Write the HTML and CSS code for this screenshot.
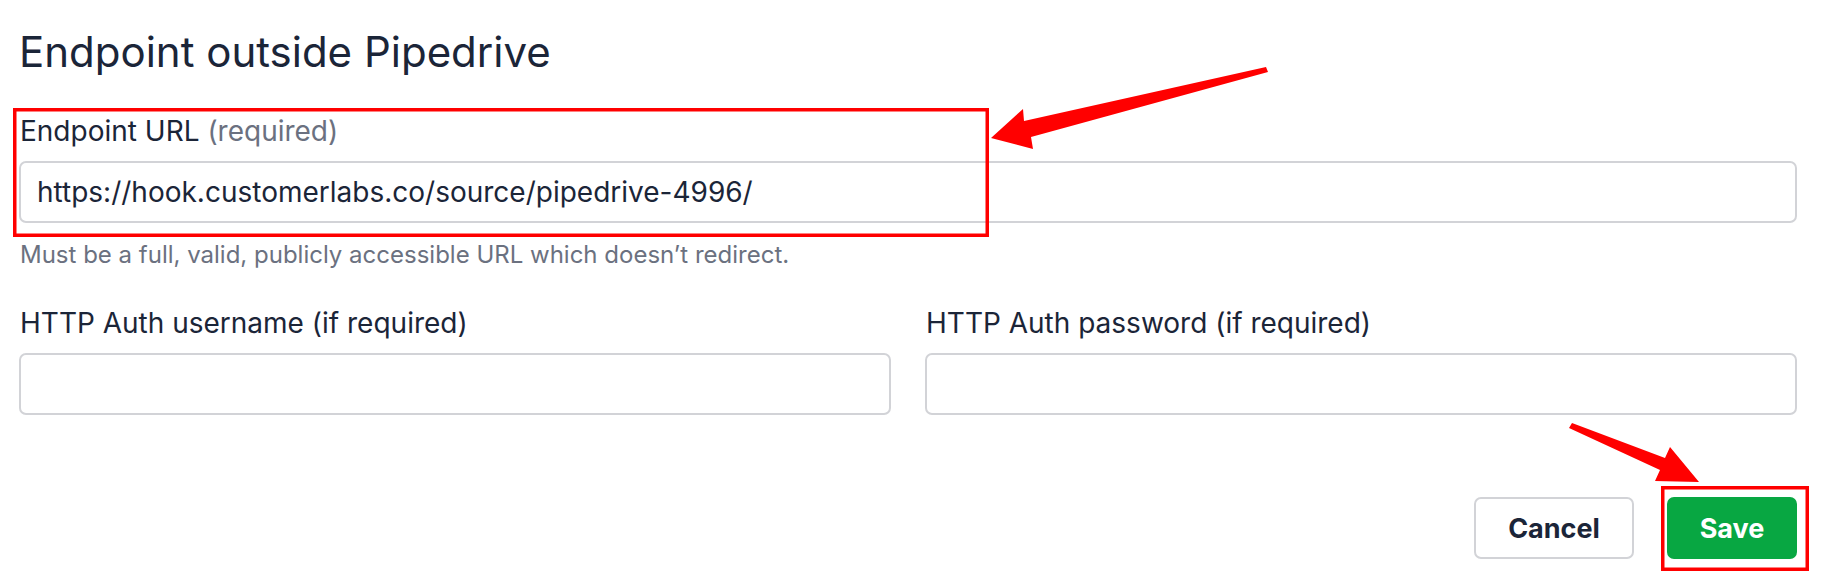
FILE: index.html
```html
<!DOCTYPE html>
<html lang="en">
<head>
<meta charset="utf-8">
<title>Endpoint outside Pipedrive</title>
<link rel="stylesheet" href="styles.css">
</head>
<body>
<main class="page">
  <h1 class="title">Endpoint outside Pipedrive</h1>

  <div class="field field-url">
    <label class="label" for="url">Endpoint URL <span class="muted">(required)</span></label>
    <input class="input" id="url" type="text" value="https://hook.customerlabs.co/source/pipedrive-4996/">
    <p class="help">Must be a full, valid, publicly accessible URL which doesn’t redirect.</p>
  </div>

  <div class="row">
    <div class="field">
      <label class="label" for="user">HTTP Auth username (if required)</label>
      <input class="input" id="user" type="text">
    </div>
    <div class="field">
      <label class="label" for="pass">HTTP Auth password (if required)</label>
      <input class="input" id="pass" type="password">
    </div>
  </div>

  <div class="actions">
    <button class="btn btn-secondary" type="button">Cancel</button>
    <button class="btn btn-primary" type="button">Save</button>
  </div>
</main>

<svg class="annotations" width="1828" height="584" viewBox="0 0 1828 584" aria-hidden="true">
  <rect x="14.75" y="109.75" width="972.5" height="125.5" fill="none" stroke="#ff0000" stroke-width="3.5"/>
  <polygon fill="#ff0000" points="991,138 1023,109 1024,121 1266,67 1268,72 1031,137 1033,149"/>
  <rect x="1662.75" y="487.75" width="144.5" height="81.5" fill="none" stroke="#ff0000" stroke-width="3.5"/>
  <polygon fill="#ff0000" points="1699,482 1655,481 1660,470 1569,428 1572,423 1665,458 1670,447"/>
</svg>
</body>
</html>
```

FILE: styles.css
```css
* {
  box-sizing: border-box;
}

html, body {
  margin: 0;
  padding: 0;
  background: #ffffff;
}

body {
  font-family: Inter, "Liberation Sans", Arial, sans-serif;
  color: #1b2538;
  width: 1828px;
  height: 584px;
  overflow: hidden;
  position: relative;
}

.page {
  padding: 0 31px 0 19px;
}

.title {
  margin: 27px 0 0;
  font-size: 42px;
  line-height: 50px;
  font-weight: 400;
  color: #1b2538;
}

.field {
  display: flex;
  flex-direction: column;
}

.field-url {
  margin-top: 38px;
}

.label {
  font-size: 28px;
  line-height: 32px;
  color: #1b2538;
  margin-bottom: 14px;
  padding-left: 1px;
}

.muted {
  color: #6b7180;
}

.input {
  height: 62px;
  width: 100%;
  border: 2px solid #d2d3d7;
  border-radius: 7px;
  padding: 0 16px;
  font-family: inherit;
  font-size: 28px;
  color: #1b2538;
  background: #ffffff;
  outline: none;
}

.help {
  margin: 20px 0 0;
  font-size: 24px;
  line-height: 24px;
  color: #6b7180;
  padding-left: 1px;
}

.row {
  display: grid;
  grid-template-columns: 1fr 1fr;
  column-gap: 34px;
  margin-top: 40px;
}

.actions {
  display: flex;
  justify-content: flex-end;
  gap: 33px;
  margin-top: 82px;
}

.btn {
  height: 62px;
  border-radius: 7px;
  font-family: inherit;
  font-size: 27px;
  font-weight: 700;
  cursor: pointer;
}

.btn-secondary {
  width: 160px;
  background: #ffffff;
  border: 2px solid #d2d3d7;
  color: #1b2538;
}

.btn-primary {
  width: 130px;
  background: #08a742;
  border: 2px solid #08a742;
  color: #ffffff;
}

.annotations {
  position: absolute;
  left: 0;
  top: 0;
  pointer-events: none;
}
```
